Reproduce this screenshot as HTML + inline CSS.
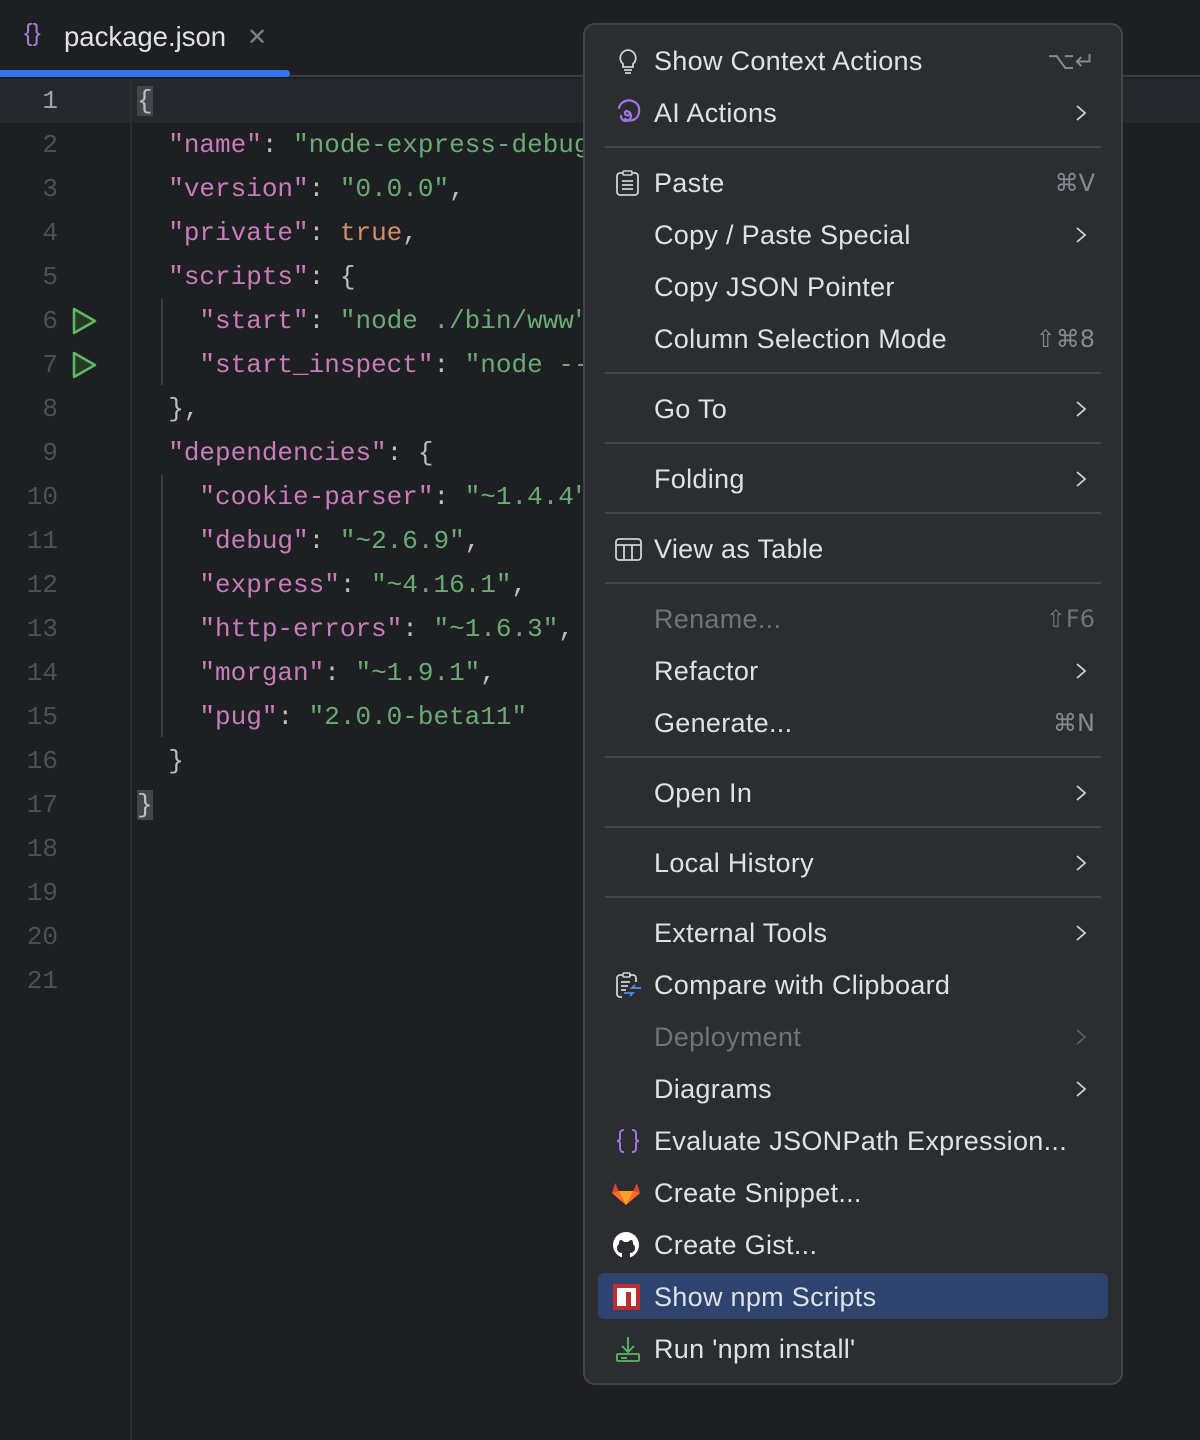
<!DOCTYPE html>
<html><head><meta charset="utf-8">
<style>
*{margin:0;padding:0;box-sizing:border-box}
html,body{width:1200px;height:1440px;overflow:hidden;background:#1e1f22}
body{position:relative;font-family:"Liberation Sans","DejaVu Sans",sans-serif}
.tabbar{position:absolute;left:0;top:0;width:1200px;height:77px;border-bottom:2px solid #393b40;background:#1e1f22}
.tabul{position:absolute;left:0;top:70px;width:290px;height:7px;background:#3574f0;border-radius:0 4px 4px 0}
.tabtxt{position:absolute;left:64px;top:21px;font-size:27.5px;color:#dfe1e5}
.tabicon{position:absolute;left:24px;top:19px;font-size:25px;color:#a77cd7;font-family:"Liberation Sans",sans-serif}
.tabx{position:absolute;left:247px;top:23px;font-size:24px;color:#7d8088}
.curline{position:absolute;left:0;top:79px;width:1200px;height:44px;background:#26282e}
.gutline{position:absolute;left:130px;top:79px;width:2px;height:1361px;background:#2b2d30}
.ln{position:absolute;left:0;width:58px;text-align:right;font-family:"Liberation Mono",monospace;font-size:26px;color:#4b5059;height:44px;line-height:44px}
.code{position:absolute;left:137px;font-family:"Liberation Mono",monospace;font-size:26px;color:#bcbec4;height:44px;line-height:44px;white-space:pre}
.k{color:#c77dbb}.s{color:#6aab73}.b{color:#cf8e6d}
.guide{position:absolute;width:2px;background:#393b40}
.run{position:absolute;left:72px}
.bh{background:#43454a}
.menu{position:absolute;left:583px;top:23px;width:540px;height:1362px;background:#2b2d30;border:2px solid #43454a;border-radius:12px}
.it{position:absolute;left:583px;width:540px;height:52px;line-height:52px;font-size:27px;letter-spacing:0.3px;color:#dfe1e5}
.it .t{position:absolute;left:71px}
.it .sc{position:absolute;right:28px;color:#868991;font-family:"DejaVu Sans","Liberation Sans",sans-serif;font-size:24px;letter-spacing:0}
.it .ch{position:absolute;right:36px;top:17px}
.it .ic{position:absolute;left:31px;top:12px;width:28px;height:28px}
.dis{color:#6f737a!important}
.sep{position:absolute;left:605px;width:496px;height:2px;background:#43454a}
.hl{position:absolute;left:598px;top:1273px;width:510px;height:46px;background:#2e436e;border-radius:6px}
</style></head><body>
<div class="tabbar"></div>
<div class="tabicon">{}</div>
<div class="tabtxt">package.json</div>
<div class="tabx">✕</div>
<div class="tabul"></div>
<div class="curline"></div>
<div class="gutline"></div>

<div class="ln" style="top:79px;color:#a1a3ab">1</div>
<div class="ln" style="top:123px">2</div>
<div class="ln" style="top:167px">3</div>
<div class="ln" style="top:211px">4</div>
<div class="ln" style="top:255px">5</div>
<div class="ln" style="top:299px">6</div>
<div class="ln" style="top:343px">7</div>
<div class="ln" style="top:387px">8</div>
<div class="ln" style="top:431px">9</div>
<div class="ln" style="top:475px">10</div>
<div class="ln" style="top:519px">11</div>
<div class="ln" style="top:563px">12</div>
<div class="ln" style="top:607px">13</div>
<div class="ln" style="top:651px">14</div>
<div class="ln" style="top:695px">15</div>
<div class="ln" style="top:739px">16</div>
<div class="ln" style="top:783px">17</div>
<div class="ln" style="top:827px">18</div>
<div class="ln" style="top:871px">19</div>
<div class="ln" style="top:915px">20</div>
<div class="ln" style="top:959px">21</div>

<svg class="run" style="top:307px" width="26" height="28"><path d="M2 2 L23 14 L2 26 Z" fill="#253a26" stroke="#5fb865" stroke-width="2.5" stroke-linejoin="round"/></svg>
<svg class="run" style="top:351px" width="26" height="28"><path d="M2 2 L23 14 L2 26 Z" fill="#253a26" stroke="#5fb865" stroke-width="2.5" stroke-linejoin="round"/></svg>

<div class="guide" style="left:161px;top:299px;height:86px"></div>
<div class="guide" style="left:161px;top:475px;height:262px"></div>

<div class="code" style="top:79px"><span class="bh">{</span></div>
<div class="code" style="top:123px">  <span class="k">"name"</span>: <span class="s">"node-express-debug</span></div>
<div class="code" style="top:167px">  <span class="k">"version"</span>: <span class="s">"0.0.0"</span>,</div>
<div class="code" style="top:211px">  <span class="k">"private"</span>: <span class="b">true</span>,</div>
<div class="code" style="top:255px">  <span class="k">"scripts"</span>: {</div>
<div class="code" style="top:299px">    <span class="k">"start"</span>: <span class="s">"node ./bin/www"</span></div>
<div class="code" style="top:343px">    <span class="k">"start_inspect"</span>: <span class="s">"node --</span></div>
<div class="code" style="top:387px">  },</div>
<div class="code" style="top:431px">  <span class="k">"dependencies"</span>: {</div>
<div class="code" style="top:475px">    <span class="k">"cookie-parser"</span>: <span class="s">"~1.4.4"</span></div>
<div class="code" style="top:519px">    <span class="k">"debug"</span>: <span class="s">"~2.6.9"</span>,</div>
<div class="code" style="top:563px">    <span class="k">"express"</span>: <span class="s">"~4.16.1"</span>,</div>
<div class="code" style="top:607px">    <span class="k">"http-errors"</span>: <span class="s">"~1.6.3"</span>,</div>
<div class="code" style="top:651px">    <span class="k">"morgan"</span>: <span class="s">"~1.9.1"</span>,</div>
<div class="code" style="top:695px">    <span class="k">"pug"</span>: <span class="s">"2.0.0-beta11"</span></div>
<div class="code" style="top:739px">  }</div>
<div class="code" style="top:783px"><span class="bh">}</span></div>

<div class="menu"></div>
<div class="hl"></div>

<div class="it" style="top:35px"><svg class="ic" viewBox="0 0 28 28"><path d="M14 3a8 8 0 0 0-5 14v3h10v-3a8 8 0 0 0-5-14z M10 23h8 M11 26h6" fill="none" stroke="#ced0d6" stroke-width="1.8"/></svg><span class="t">Show Context Actions</span><span class="sc">⌥↵</span></div>
<div class="it" style="top:87px"><svg class="ic" viewBox="0 0 28 28"><path d="M16 14a2.5 2.5 0 1 1-4-2a5 5 0 1 1-5 5 M5 9a10 9 0 0 1 20 3a9 9 0 0 1-14 8" fill="none" stroke="#a571e6" stroke-width="2.2" stroke-linecap="round"/></svg><span class="t">AI Actions</span><svg class="ch" width="12" height="18"><path d="M2 2l8 7-8 7" fill="none" stroke="#ced0d6" stroke-width="1.8"/></svg></div>
<div class="sep" style="top:146px"></div>
<div class="it" style="top:157px"><svg class="ic" viewBox="0 0 28 28"><rect x="3" y="4" width="21" height="22" rx="3" fill="none" stroke="#ced0d6" stroke-width="1.8"/><rect x="9" y="2" width="9" height="4" rx="1" fill="#2b2d30" stroke="#ced0d6" stroke-width="1.6"/><path d="M8 12h11M8 16h11M8 20h11" stroke="#ced0d6" stroke-width="1.8"/></svg><span class="t">Paste</span><span class="sc">⌘V</span></div>
<div class="it" style="top:209px"><span class="t">Copy / Paste Special</span><svg class="ch" width="12" height="18"><path d="M2 2l8 7-8 7" fill="none" stroke="#ced0d6" stroke-width="1.8"/></svg></div>
<div class="it" style="top:261px"><span class="t">Copy JSON Pointer</span></div>
<div class="it" style="top:313px"><span class="t">Column Selection Mode</span><span class="sc">⇧⌘8</span></div>
<div class="sep" style="top:372px"></div>
<div class="it" style="top:383px"><span class="t">Go To</span><svg class="ch" width="12" height="18"><path d="M2 2l8 7-8 7" fill="none" stroke="#ced0d6" stroke-width="1.8"/></svg></div>
<div class="sep" style="top:442px"></div>
<div class="it" style="top:453px"><span class="t">Folding</span><svg class="ch" width="12" height="18"><path d="M2 2l8 7-8 7" fill="none" stroke="#ced0d6" stroke-width="1.8"/></svg></div>
<div class="sep" style="top:512px"></div>
<div class="it" style="top:523px"><svg class="ic" viewBox="0 0 28 28"><rect x="2" y="4" width="25" height="21" rx="3" fill="none" stroke="#ced0d6" stroke-width="1.8"/><path d="M2 10h25M10 10v15M18 10v15" stroke="#ced0d6" stroke-width="1.8"/></svg><span class="t">View as Table</span></div>
<div class="sep" style="top:582px"></div>
<div class="it" style="top:593px"><span class="t dis">Rename...</span><span class="sc dis">⇧F6</span></div>
<div class="it" style="top:645px"><span class="t">Refactor</span><svg class="ch" width="12" height="18"><path d="M2 2l8 7-8 7" fill="none" stroke="#ced0d6" stroke-width="1.8"/></svg></div>
<div class="it" style="top:697px"><span class="t">Generate...</span><span class="sc">⌘N</span></div>
<div class="sep" style="top:756px"></div>
<div class="it" style="top:767px"><span class="t">Open In</span><svg class="ch" width="12" height="18"><path d="M2 2l8 7-8 7" fill="none" stroke="#ced0d6" stroke-width="1.8"/></svg></div>
<div class="sep" style="top:826px"></div>
<div class="it" style="top:837px"><span class="t">Local History</span><svg class="ch" width="12" height="18"><path d="M2 2l8 7-8 7" fill="none" stroke="#ced0d6" stroke-width="1.8"/></svg></div>
<div class="sep" style="top:896px"></div>
<div class="it" style="top:907px"><span class="t">External Tools</span><svg class="ch" width="12" height="18"><path d="M2 2l8 7-8 7" fill="none" stroke="#ced0d6" stroke-width="1.8"/></svg></div>
<div class="it" style="top:959px"><svg class="ic" viewBox="0 0 28 28"><path d="M15 4h4a3 3 0 0 1 3 3v4 M8 26H6a3 3 0 0 1-3-3V7a3 3 0 0 1 3-3h3" fill="none" stroke="#ced0d6" stroke-width="1.8"/><rect x="9" y="2" width="7" height="4" rx="1" fill="none" stroke="#ced0d6" stroke-width="1.6"/><path d="M7 11h9M7 15h7M7 19h5" stroke="#ced0d6" stroke-width="1.8"/><path d="M27 17h-9l3-3M10 22h9l-3 3" fill="none" stroke="#548af7" stroke-width="1.8"/></svg><span class="t">Compare with Clipboard</span></div>
<div class="it" style="top:1011px"><span class="t dis">Deployment</span><svg class="ch" width="12" height="18"><path d="M2 2l8 7-8 7" fill="none" stroke="#5a5d63" stroke-width="1.8"/></svg></div>
<div class="it" style="top:1063px"><span class="t">Diagrams</span><svg class="ch" width="12" height="18"><path d="M2 2l8 7-8 7" fill="none" stroke="#ced0d6" stroke-width="1.8"/></svg></div>
<div class="it" style="top:1115px"><svg class="ic" viewBox="0 0 28 28"><path d="M10 3c-3 0-4 1-4 4v4c0 2-1 3-3 3 2 0 3 1 3 3v4c0 3 1 4 4 4M18 3c3 0 4 1 4 4v4c0 2 1 3 3 3-2 0-3 1-3 3v4c0 3-1 4-4 4" fill="none" stroke="#a571e6" stroke-width="2"/></svg><span class="t">Evaluate JSONPath Expression...</span></div>
<div class="it" style="top:1167px"><svg class="ic" viewBox="0 0 28 28" style="left:29px"><path d="M3 4l4 8h14l4-8 3 10-14 12L0 14z" fill="#e24329"/><path d="M0 14l14 12 14-12-7-2H7z" fill="#fc6d26"/><path d="M7 12h14l-7 14z" fill="#fca326"/></svg><span class="t">Create Snippet...</span></div>
<div class="it" style="top:1219px"><svg class="ic" viewBox="0 0 28 28" style="left:29px"><circle cx="14" cy="14" r="13" fill="#fff"/><path d="M10 27v-5c-3 0-5-2-5-5 0-2 1-3 2-4 0-1 0-3 1-4 2 0 3 1 4 2h4c1-1 2-2 4-2 1 1 1 3 1 4 1 1 2 2 2 4 0 3-2 5-5 5v5z" fill="#2b2d30"/></svg><span class="t">Create Gist...</span></div>
<div class="it" style="top:1271px"><svg class="ic" viewBox="0 0 28 28" style="left:30px"><rect x="0" y="1" width="27" height="26" fill="#bb2f31"/><rect x="4" y="5" width="19" height="18" fill="#fff"/><rect x="13" y="9" width="5" height="14" fill="#bb2f31"/></svg><span class="t">Show npm Scripts</span></div>
<div class="it" style="top:1323px"><svg class="ic" viewBox="0 0 28 28"><path d="M14 2v14M8 11l6 6 6-6" fill="none" stroke="#5fb865" stroke-width="1.8"/><rect x="3" y="19" width="22" height="7" rx="1" fill="none" stroke="#5fb865" stroke-width="1.8"/><path d="M7 23h6" stroke="#5fb865" stroke-width="1.8"/></svg><span class="t">Run 'npm install'</span></div>
</body></html>
